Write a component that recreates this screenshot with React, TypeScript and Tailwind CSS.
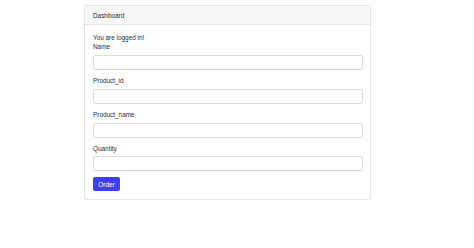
import React from "react";

const fields = ["Name", "Product_id", "Product_name", "Quantity"];

export default function App() {
	return (
		<div className="min-h-screen bg-white pt-[5px] pl-[84px] font-['Liberation_Sans',Arial,sans-serif] text-[6.4px] text-[#2a2d31]">
			<div className="w-[287px] rounded-[2px] border border-[#e6e6e6] bg-white">
				<div className="flex h-[19px] items-center border-b border-[#e6e6e6] bg-[#f7f7f7] px-[8px] leading-[9px]">
					Dashboard
				</div>
				<div className="px-[8px] pt-[8px] pb-[8px] leading-[9.4px]">
					<div>You are logged in!</div>
					<form className="flex flex-col" onSubmit={(e) => e.preventDefault()}>
						{fields.map((f) => (
							<div key={f} className="mb-[6px] flex flex-col">
								<label className="mb-[3.3px] block">{f}</label>
								<input
									type="text"
									className="h-[15px] w-[270px] rounded-[2px] border border-[#dedede] bg-white px-[5px] outline-none"
								/>
							</div>
						))}
						<div>
							<button
								type="submit"
								className="h-[14px] w-[27px] rounded-[2px] bg-[#3f3ff0] text-[6.4px] leading-[9px] text-white"
							>
								Order
							</button>
						</div>
					</form>
				</div>
			</div>
		</div>
	);
}
